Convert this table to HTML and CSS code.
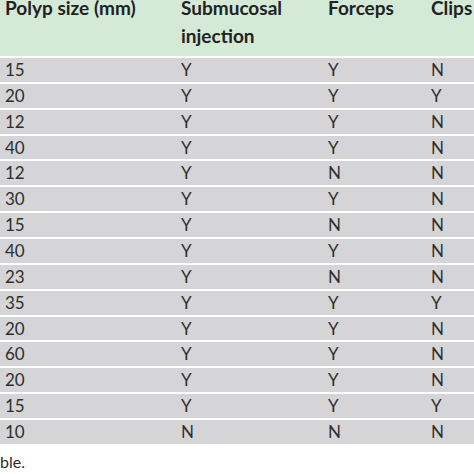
FILE: index.html
```html
<!DOCTYPE html>
<html>
<head>
<meta charset="utf-8">
<link rel="stylesheet" href="styles.css">
</head>
<body>
<table class="data">
  <thead>
    <tr class="head">
      <th class="c1"><span class="ln">Polyp size (mm)</span></th>
      <th class="c2"><span class="ln">Submucosal</span><span class="ln ln2">injection</span></th>
      <th class="c3"><span class="ln">Forceps</span></th>
      <th class="c4"><span class="ln">Clips</span></th>
    </tr>
  </thead>
  <tbody>
    <tr><td>15</td><td>Y</td><td>Y</td><td>N</td></tr>
    <tr><td>20</td><td>Y</td><td>Y</td><td>Y</td></tr>
    <tr><td>12</td><td>Y</td><td>Y</td><td>N</td></tr>
    <tr><td>40</td><td>Y</td><td>Y</td><td>N</td></tr>
    <tr><td>12</td><td>Y</td><td>N</td><td>N</td></tr>
    <tr><td>30</td><td>Y</td><td>Y</td><td>N</td></tr>
    <tr><td>15</td><td>Y</td><td>N</td><td>N</td></tr>
    <tr><td>40</td><td>Y</td><td>Y</td><td>N</td></tr>
    <tr><td>23</td><td>Y</td><td>N</td><td>N</td></tr>
    <tr><td>35</td><td>Y</td><td>Y</td><td>Y</td></tr>
    <tr><td>20</td><td>Y</td><td>Y</td><td>N</td></tr>
    <tr><td>60</td><td>Y</td><td>Y</td><td>N</td></tr>
    <tr><td>20</td><td>Y</td><td>Y</td><td>N</td></tr>
    <tr><td>15</td><td>Y</td><td>Y</td><td>Y</td></tr>
    <tr><td>10</td><td>N</td><td>N</td><td>N</td></tr>
  </tbody>
</table>
<p class="caption">ble.</p>
</body>
</html>
```
FILE: styles.css
```css
html, body {
  margin: 0;
  padding: 0;
  background: #ffffff;
}
body {
  width: 474px;
  height: 474px;
  overflow: hidden;
  font-family: Lato, "Open Sans", sans-serif;
  color: #2b2b2b;
}
.data {
  width: 474px;
  border-collapse: collapse;
  table-layout: fixed;
}
.data th, .data td {
  padding: 0 0 0 5px;
  text-align: left;
}
.head th {
  background: #d4ead6;
  height: 56px;
  vertical-align: top;
  font-weight: 700;
  font-size: 19px;
  color: #222222;
}
.ln {
  display: block;
  line-height: 16px;
  white-space: nowrap;
}
.ln2 {
  margin-top: 12px;
}
.c1 { width: 171px; }
.c2 { width: 142px; }
.c3 { width: 98px; }
.c4 { width: 43px; }
.data tbody td {
  background: #d5d5d7;
  border-top: 2px solid #ffffff;
  height: 23.87px;
  font-size: 17px;
  line-height: 20px;
  vertical-align: middle;
  color: #2e2e2e;
}
.caption {
  margin: 8px 0 0 0;
  font-size: 16px;
  line-height: 20px;
  color: #2e2e2e;
}
```
